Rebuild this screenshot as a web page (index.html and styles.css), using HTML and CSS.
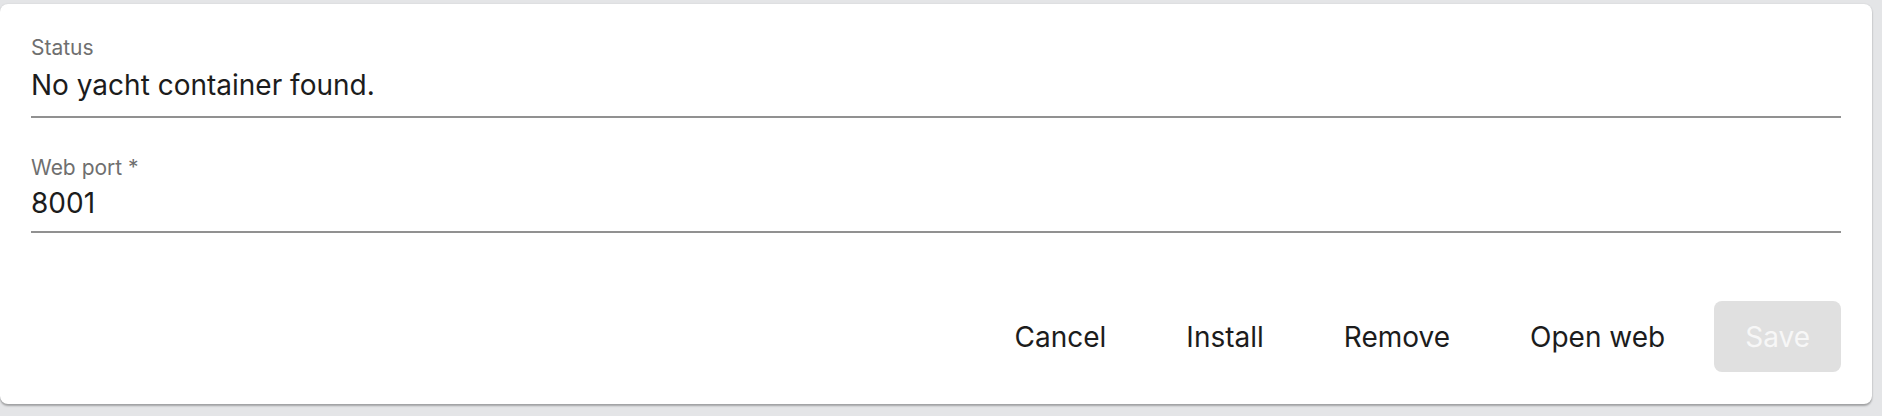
FILE: index.html
```html
<!DOCTYPE html>
<html lang="en">
  <head>
    <meta charset="UTF-8" />
    <meta name="viewport" content="width=device-width, initial-scale=1.0" />
    <title>Yacht settings</title>
    <link rel="stylesheet" href="styles.css">
  </head>
  <body>
    <form class="card" id="yachtForm">
      <div class="field">
        <label class="field-label" for="status">Status</label>
        <input class="field-input" id="status" type="text" value="No yacht container found." readonly />
      </div>
      <div class="field field-port">
        <label class="field-label" for="port">Web port *</label>
        <input class="field-input" id="port" type="text" value="8001" required />
      </div>
      <div class="actions">
        <button type="button" class="btn">Cancel</button>
        <button type="button" class="btn">Install</button>
        <button type="button" class="btn">Remove</button>
        <button type="button" class="btn">Open web</button>
        <button type="submit" class="btn btn-save" disabled>Save</button>
      </div>
    </form>
  </body>
</html>
```

FILE: styles.css
```css
* {
  box-sizing: border-box;
}

body {
  background-color: #e4e5e7;
  margin: 0;
  padding: 4px 10px 12px 0;
  font-family: Inter, "Noto Sans", sans-serif;
}

.card {
  display: flex;
  flex-direction: column;
  background: #ffffff;
  border-radius: 8px;
  box-shadow: 0 2px 2px rgba(0, 0, 0, 0.28), 0 0 2px rgba(0, 0, 0, 0.1);
  padding: 31px 31px 32px 31px;
  height: 400px;
}

.field {
  display: flex;
  flex-direction: column;
}

.field-label {
  color: #6f6f6f;
  font-size: 21px;
  line-height: 25px;
  margin-bottom: 8px;
}

.field-input {
  border: none;
  border-bottom: 2px solid #919191;
  padding: 0 0 14px 0;
  margin: 0;
  font-family: inherit;
  font-size: 28px;
  line-height: 34px;
  height: 50px;
  color: #1c1c1c;
  outline: none;
  background: transparent;
}

.field-port {
  margin-top: 37px;
}

.field-port .field-label {
  margin-bottom: 6px;
}

.field-port .field-input {
  padding-bottom: 11px;
  height: 47px;
}

.actions {
  display: flex;
  justify-content: flex-end;
  gap: 18px;
  margin-top: auto;
}

.btn {
  height: 71px;
  padding: 0 31px;
  border: none;
  border-radius: 8px;
  background: transparent;
  font-family: inherit;
  font-size: 28px;
  color: #1c1c1c;
  cursor: pointer;
}

.btn-save {
  background-color: #e0e0e0;
  color: #f7f7f7;
  cursor: default;
}
```
